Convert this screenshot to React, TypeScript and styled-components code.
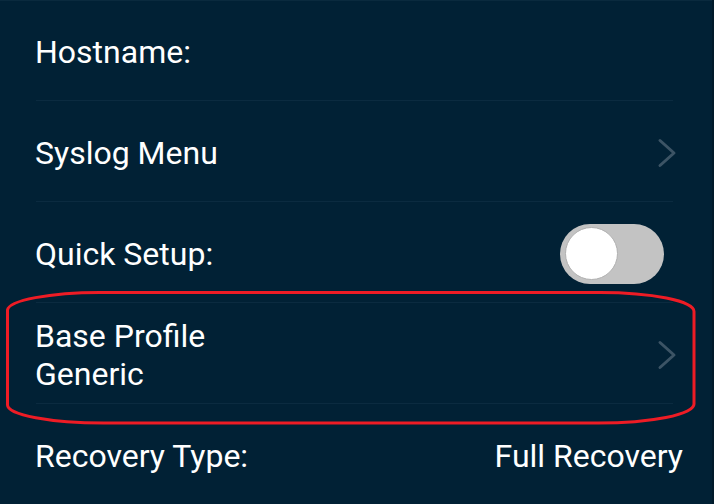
import React from 'react'
import styled, { createGlobalStyle } from 'styled-components'

const GlobalStyle = createGlobalStyle`
  html, body {
    margin: 0;
    padding: 0;
    background: #012135;
  }
  body {
    font-family: Roboto, 'Noto Sans', sans-serif;
    -webkit-font-smoothing: antialiased;
  }
`

const Screen = styled.div`
  position: relative;
  width: 714px;
  height: 504px;
  box-sizing: border-box;
  background: #012135;
  border-right: 2px solid #001a2a;
  overflow: hidden;
  color: #ffffff;
`

const List = styled.div`
  display: flex;
  flex-direction: column;
  border-top: 1px solid #0a2a3e;
`

const Row = styled.div<{ $height?: number }>`
  display: flex;
  align-items: center;
  justify-content: space-between;
  height: ${({ $height }) => $height ?? 100}px;
  box-sizing: border-box;
  padding: 3px 29px 0 35px;
`

const Divider = styled.div`
  height: 1px;
  margin: 0 39px 0 36px;
  background: #0b2b40;
`

const Label = styled.div`
  font-size: 32px;
  line-height: 38px;
  letter-spacing: 0;
  white-space: nowrap;
`

const Value = styled(Label)`
  text-align: right;
`

const Chevron = styled.svg`
  width: 20px;
  height: 32px;
  margin-right: 6px;
  flex-shrink: 0;
`

const SwitchTrack = styled.div<{ $on?: boolean }>`
  display: flex;
  align-items: center;
  justify-content: ${({ $on }) => ($on ? 'flex-end' : 'flex-start')};
  width: 104px;
  height: 60px;
  box-sizing: border-box;
  padding: 0 5px;
  margin-right: 19px;
  border-radius: 30px;
  background: ${({ $on }) => ($on ? '#2e9be0' : '#c3c3c3')};
`

const SwitchThumb = styled.div`
  width: 53px;
  height: 53px;
  border-radius: 50%;
  box-sizing: border-box;
  background: #ffffff;
  border: 1px solid #b0b0b0;
`

const Highlight = styled.svg`
  position: absolute;
  left: 0;
  top: 0;
  pointer-events: none;
`

const ArrowRight = () => (
  <Chevron viewBox="0 0 20 32">
    <path
      d="M3 3.5 L17 16 L3 28.5"
      fill="none"
      stroke="#3c5465"
      strokeWidth="3"
      strokeLinecap="round"
      strokeLinejoin="round"
    />
  </Chevron>
)

export default function App() {
  return (
    <>
      <GlobalStyle />
      <Screen>
        <List>
          <Row $height={99}>
            <Label>Hostname:</Label>
          </Row>
          <Divider />
          <Row>
            <Label>Syslog Menu</Label>
            <ArrowRight />
          </Row>
          <Divider />
          <Row>
            <Label>Quick Setup:</Label>
            <SwitchTrack>
              <SwitchThumb />
            </SwitchTrack>
          </Row>
          <Divider />
          <Row>
            <div>
              <Label>Base Profile</Label>
              <Label>Generic</Label>
            </div>
            <ArrowRight />
          </Row>
          <Divider />
          <Row>
            <Label>Recovery Type:</Label>
            <Value>Full Recovery</Value>
          </Row>
        </List>
        <Highlight width="714" height="504" viewBox="0 0 714 504">
          <path
            d="M100 292.5 L600 292.5 A94 19 0 0 1 694 311.5 L694 404 A96 19 0 0 1 598 423 L104 423 A97 18 0 0 1 7.5 405 L7.5 310 A93 18 0 0 1 100 292.5 Z"
            fill="none"
            stroke="#ee1c25"
            strokeWidth="3"
          />
        </Highlight>
      </Screen>
    </>
  )
}
